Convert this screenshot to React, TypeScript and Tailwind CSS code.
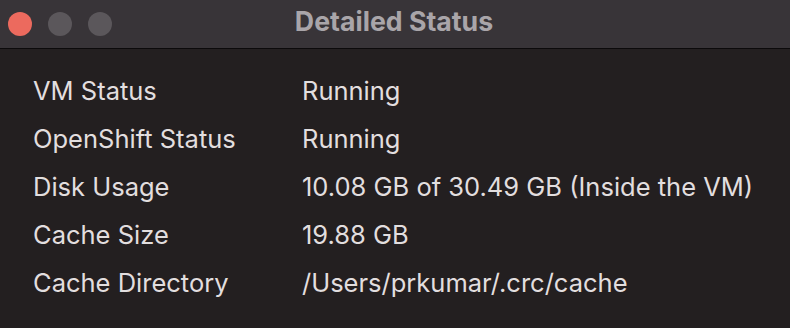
const ROWS = [
  { label: "VM Status", value: "Running" },
  { label: "OpenShift Status", value: "Running" },
  { label: "Disk Usage", value: "10.08 GB of 30.49 GB (Inside the VM)" },
  { label: "Cache Size", value: "19.88 GB" },
  { label: "Cache Directory", value: "/Users/prkumar/.crc/cache" },
];

export default function App() {
  return (
    <div
      className="flex h-[328px] w-[790px] flex-col overflow-hidden bg-[#231f20]"
      style={{ fontFamily: "Inter, 'Liberation Sans', sans-serif" }}
    >
      <div className="relative flex h-[49px] items-center border-b border-[#0c0a0b] bg-[#383438]">
        <div className="flex gap-[16px] pl-[8px]">
          <span className="h-[24px] w-[24px] rounded-full bg-[#ec6a5e]" />
          <span className="h-[24px] w-[24px] rounded-full bg-[#5b575b]" />
          <span className="h-[24px] w-[24px] rounded-full bg-[#5b575b]" />
        </div>
        <div className="absolute inset-0 flex items-center justify-center pb-[6px] pr-[2px]">
          <span className="text-[26.7px] font-bold text-[#a9a5a9]">Detailed Status</span>
        </div>
      </div>
      <div className="flex flex-col pt-[18px] pl-[33px]">
        {ROWS.map((row) => (
          <div key={row.label} className="flex h-[48px] items-center text-[25.5px] text-[#e2dedf]">
            <span className="w-[269px]">{row.label}</span>
            <span>{row.value}</span>
          </div>
        ))}
      </div>
    </div>
  );
}
